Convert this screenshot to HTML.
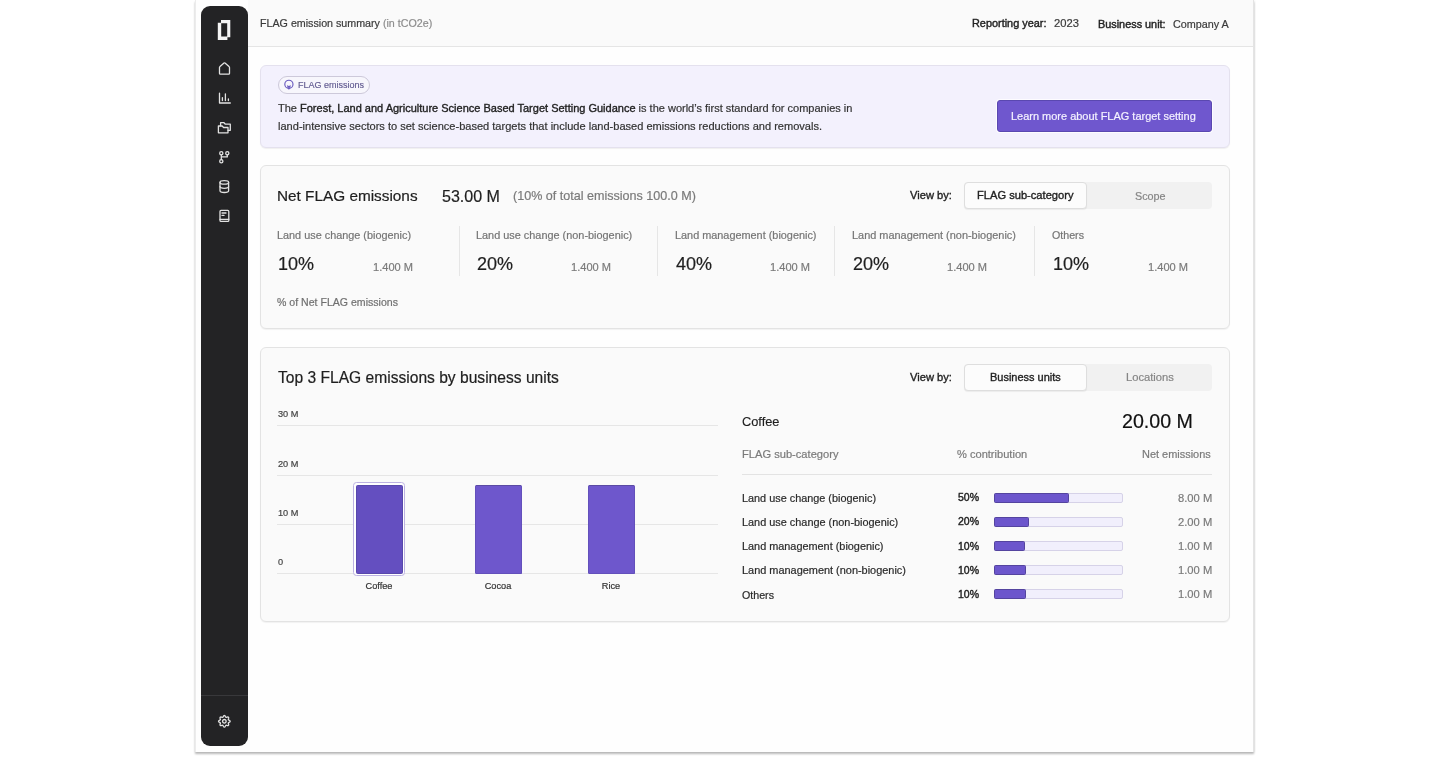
<!DOCTYPE html>
<html><head><meta charset="utf-8">
<style>
*{box-sizing:border-box;margin:0;padding:0}
html,body{width:1448px;height:758px;overflow:hidden;background:#fff;font-family:"Liberation Sans",sans-serif;color:#222}
.t{position:absolute;white-space:nowrap;line-height:1;will-change:transform}
svg{position:absolute;overflow:visible}
</style></head><body>
<div style="position:absolute;left:195px;top:0px;width:1059px;height:752px;background:#fefefe;border-left:1px solid #ececec;border-right:1px solid #e4e4e4;box-shadow:0 2px 2px rgba(0,0,0,0.28),1px 0 2px rgba(0,0,0,0.04)"></div>
<div style="position:absolute;left:248px;top:0px;width:1005px;height:47px;background:#fafafa;border-bottom:1px solid #e5e5e5"></div>
<div class="t" style="top:18.14px;font-size:10.7px;color:#3a3a3a;left:260px;-webkit-text-stroke:0.2px #3a3a3a;">FLAG emission summary <span style="color:#8c8c8c;-webkit-text-stroke:0.2px #8c8c8c">(in tCO2e)</span></div>
<div class="t" style="top:18.47px;font-size:10.9px;color:#222;left:972px;-webkit-text-stroke:0.4px #222;">Reporting year:</div>
<div class="t" style="top:18.22px;font-size:11.2px;color:#3a3a3a;left:1053.7px;-webkit-text-stroke:0.2px #3a3a3a;">2023</div>
<div class="t" style="top:18.50px;font-size:10.86px;color:#222;left:1098.4px;-webkit-text-stroke:0.4px #222;">Business unit:</div>
<div class="t" style="top:18.56px;font-size:10.8px;color:#3a3a3a;left:1173px;-webkit-text-stroke:0.2px #3a3a3a;">Company A</div>
<div style="position:absolute;left:201px;top:6px;width:47px;height:740px;background:#232325;border-radius:9px"></div>
<div style="position:absolute;left:201px;top:695px;width:47px;height:1px;background:#38383b"></div>
<svg style="left:0;top:0" width="1448" height="758"><path fill="#f4f4f4" fill-rule="evenodd" d="M221 20H230.3V37.3H227.4V40H217.8V22.8H221Z M221.2 23.2V36.4H227.2V23.2Z"/></svg>
<svg style="left:0;top:0" width="1448" height="758" fill="none" stroke="#e2e2e2" stroke-width="1.3" stroke-linejoin="round" stroke-linecap="round"><path d="M219.5 67.6Q219.5 67 220 66.6L224 63.1Q224.5 62.7 225 63.1L229 66.6Q229.5 67 229.5 67.6V73.4Q229.5 74.2 228.7 74.2H220.3Q219.5 74.2 219.5 73.4Z"/><path d="M219.5 93.2V103H230.3"/><path d="M222.4 97.6V100.6M225.4 93.8V100.6M228.4 99V100.6"/><path d="M218.4 126H222.2L223.6 127.5H228V132.8H218.4Z"/><path d="M220.6 125.8V122.7H224L225.4 124.2H230.3V130.3H228"/><circle cx="221.3" cy="153.3" r="1.6"/><circle cx="227.3" cy="153.3" r="1.6"/><circle cx="221.3" cy="161.2" r="1.6"/><path d="M221.3 155V159.6M227.3 155V156.9H221.3"/><ellipse cx="224.3" cy="182.4" rx="4.3" ry="1.7"/><path d="M220 182.4V190.8C220 191.8 222 192.5 224.3 192.5C226.6 192.5 228.6 191.8 228.6 190.8V182.4"/><path d="M220 186.6C220 187.6 222 188.3 224.3 188.3C226.6 188.3 228.6 187.6 228.6 186.6"/><rect x="220" y="210.4" width="8.8" height="11" rx="1"/><path d="M222 213H226M222 215.4H224M220 219.3H228.8"/><g transform="translate(224.35 721.3)"><circle r="1.8"/><path d="M0.00 -5.80 L0.23 -5.76 L0.44 -5.64 L0.65 -5.45 L0.83 -5.22 L0.99 -4.95 L1.12 -4.69 L1.25 -4.44 L1.37 -4.23 L1.50 -4.07 L1.65 -3.97 L1.82 -3.94 L2.02 -3.96 L2.25 -4.02 L2.52 -4.11 L2.81 -4.20 L3.10 -4.27 L3.40 -4.31 L3.67 -4.30 L3.91 -4.23 L4.10 -4.10 L4.23 -3.91 L4.30 -3.67 L4.31 -3.40 L4.27 -3.10 L4.20 -2.81 L4.11 -2.52 L4.02 -2.25 L3.96 -2.02 L3.94 -1.82 L3.97 -1.65 L4.07 -1.50 L4.23 -1.37 L4.44 -1.25 L4.69 -1.12 L4.95 -0.99 L5.22 -0.83 L5.45 -0.65 L5.64 -0.44 L5.76 -0.23 L5.80 -0.00 L5.76 0.23 L5.64 0.44 L5.45 0.65 L5.22 0.83 L4.95 0.99 L4.69 1.12 L4.44 1.25 L4.23 1.37 L4.07 1.50 L3.97 1.65 L3.94 1.82 L3.96 2.02 L4.02 2.25 L4.11 2.52 L4.20 2.81 L4.27 3.10 L4.31 3.40 L4.30 3.67 L4.23 3.91 L4.10 4.10 L3.91 4.23 L3.67 4.30 L3.40 4.31 L3.10 4.27 L2.81 4.20 L2.52 4.11 L2.25 4.02 L2.02 3.96 L1.82 3.94 L1.65 3.97 L1.50 4.07 L1.37 4.23 L1.25 4.44 L1.12 4.69 L0.99 4.95 L0.83 5.22 L0.65 5.45 L0.44 5.64 L0.23 5.76 L0.00 5.80 L-0.23 5.76 L-0.44 5.64 L-0.65 5.45 L-0.83 5.22 L-0.99 4.95 L-1.12 4.69 L-1.25 4.44 L-1.37 4.23 L-1.50 4.07 L-1.65 3.97 L-1.82 3.94 L-2.02 3.96 L-2.25 4.02 L-2.52 4.11 L-2.81 4.20 L-3.10 4.27 L-3.40 4.31 L-3.67 4.30 L-3.91 4.23 L-4.10 4.10 L-4.23 3.91 L-4.30 3.67 L-4.31 3.40 L-4.27 3.10 L-4.20 2.81 L-4.11 2.52 L-4.02 2.25 L-3.96 2.02 L-3.94 1.82 L-3.97 1.65 L-4.07 1.50 L-4.23 1.37 L-4.44 1.25 L-4.69 1.12 L-4.95 0.99 L-5.22 0.83 L-5.45 0.65 L-5.64 0.44 L-5.76 0.23 L-5.80 0.00 L-5.76 -0.23 L-5.64 -0.44 L-5.45 -0.65 L-5.22 -0.83 L-4.95 -0.99 L-4.69 -1.12 L-4.44 -1.25 L-4.23 -1.37 L-4.07 -1.50 L-3.97 -1.65 L-3.94 -1.82 L-3.96 -2.02 L-4.02 -2.25 L-4.11 -2.52 L-4.20 -2.81 L-4.27 -3.10 L-4.31 -3.40 L-4.30 -3.67 L-4.23 -3.91 L-4.10 -4.10 L-3.91 -4.23 L-3.67 -4.30 L-3.40 -4.31 L-3.10 -4.27 L-2.81 -4.20 L-2.52 -4.11 L-2.25 -4.02 L-2.02 -3.96 L-1.82 -3.94 L-1.65 -3.97 L-1.50 -4.07 L-1.37 -4.23 L-1.25 -4.44 L-1.12 -4.69 L-0.99 -4.95 L-0.83 -5.22 L-0.65 -5.45 L-0.44 -5.64 L-0.23 -5.76 L-0.00 -5.80Z"/></g></svg>
<div style="position:absolute;left:260px;top:65px;width:970px;height:83px;background:#f3f1fd;border:1px solid #e4e1ee;border-radius:6px;box-shadow:0 1px 1px rgba(0,0,0,0.06)"></div>
<div style="position:absolute;left:277.5px;top:76.3px;width:92.5px;height:17.299999999999997px;border:1px solid #cdc9da;border-radius:9px;background:#f7f6fc"></div>
<svg style="left:0;top:0" width="1448" height="758" fill="none" stroke="#6a5bbf" stroke-width="1.15"><circle cx="288.9" cy="84.3" r="4.1"/><path d="M287.2 85.6Q288.9 87.6 290.6 85.6" /><path d="M287.6 87.4H290.2L288.9 89.4Z" fill="#6a5bbf" stroke-width="0.6"/></svg>
<div class="t" style="top:81.08px;font-size:9px;color:#615a90;left:297.6px;-webkit-text-stroke:0.15px #615a90;">FLAG emissions</div>
<div class="t" style="top:103.39px;font-size:11px;color:#333;left:278px;-webkit-text-stroke:0.2px #333;">The <span style="-webkit-text-stroke:0.35px #222;color:#222">Forest, Land and Agriculture Science Based Target Setting Guidance</span> is the world&rsquo;s first standard for companies in</div>
<div class="t" style="top:121.04px;font-size:11.05px;color:#333;left:278px;-webkit-text-stroke:0.2px #333;">land-intensive sectors to set science-based targets that include land-based emissions reductions and removals.</div>
<div style="position:absolute;left:996.7px;top:100px;width:215.29999999999995px;height:32px;background:#6f57ce;border:1px solid #5a48b0;border-radius:3px;box-shadow:0 0 0 1px rgba(255,255,255,0.8)"></div>
<div class="t" style="top:111.40px;font-size:10.98px;color:#f4f2ff;left:1011.4px;-webkit-text-stroke:0.2px #f4f2ff;">Learn more about FLAG target setting</div>
<div style="position:absolute;left:260px;top:165px;width:970px;height:164px;background:#fafafa;border:1px solid #e3e3e3;border-radius:6px;box-shadow:0 1px 1px rgba(0,0,0,0.05)"></div>
<div class="t" style="top:188.42px;font-size:15.33px;color:#1e1e1e;left:277.4px;-webkit-text-stroke:0.2px #1e1e1e;">Net FLAG emissions</div>
<div class="t" style="top:187.81px;font-size:16.05px;color:#1e1e1e;left:441.5px;-webkit-text-stroke:0.2px #1e1e1e;">53.00 M</div>
<div class="t" style="top:190.36px;font-size:12.57px;color:#7a7a7a;left:513.3px;-webkit-text-stroke:0.2px #7a7a7a;">(10% of total emissions 100.0 M)</div>
<div class="t" style="top:190.24px;font-size:11.17px;color:#222;left:910px;-webkit-text-stroke:0.35px #222;">View by:</div>
<div style="position:absolute;left:964px;top:182px;width:248px;height:27px;background:#f1f1f1;border-radius:4px"></div>
<div style="position:absolute;left:964px;top:182px;width:123px;height:27px;background:#fcfcfc;border:1px solid #dedede;border-radius:4px;box-shadow:0 1px 1px rgba(0,0,0,0.06)"></div>
<div class="t" style="top:190.28px;font-size:11.13px;color:#222;left:976.7px;-webkit-text-stroke:0.35px #222;">FLAG sub-category</div>
<div class="t" style="top:190.56px;font-size:10.8px;color:#858585;left:1135px;-webkit-text-stroke:0.2px #858585;">Scope</div>
<div class="t" style="top:230.00px;font-size:10.86px;color:#757575;left:277.4px;-webkit-text-stroke:0.2px #757575;">Land use change (biogenic)</div>
<div class="t" style="top:254.56px;font-size:18px;color:#1e1e1e;left:278.4px;-webkit-text-stroke:0.2px #1e1e1e;">10%</div>
<div class="t" style="top:261.63px;font-size:11.07px;color:#7a7a7a;right:1035px;-webkit-text-stroke:0.2px #7a7a7a;">1.400 M</div>
<div class="t" style="top:229.97px;font-size:10.9px;color:#757575;left:476px;-webkit-text-stroke:0.2px #757575;">Land use change (non-biogenic)</div>
<div class="t" style="top:254.56px;font-size:18px;color:#1e1e1e;left:477px;-webkit-text-stroke:0.2px #1e1e1e;">20%</div>
<div class="t" style="top:261.63px;font-size:11.07px;color:#7a7a7a;right:837.3px;-webkit-text-stroke:0.2px #7a7a7a;">1.400 M</div>
<div class="t" style="top:229.99px;font-size:10.88px;color:#757575;left:674.5px;-webkit-text-stroke:0.2px #757575;">Land management (biogenic)</div>
<div class="t" style="top:254.56px;font-size:18px;color:#1e1e1e;left:675.5px;-webkit-text-stroke:0.2px #1e1e1e;">40%</div>
<div class="t" style="top:261.63px;font-size:11.07px;color:#7a7a7a;right:637.8px;-webkit-text-stroke:0.2px #7a7a7a;">1.400 M</div>
<div class="t" style="top:229.95px;font-size:10.93px;color:#757575;left:851.5px;-webkit-text-stroke:0.2px #757575;">Land management (non-biogenic)</div>
<div class="t" style="top:254.56px;font-size:18px;color:#1e1e1e;left:852.5px;-webkit-text-stroke:0.2px #1e1e1e;">20%</div>
<div class="t" style="top:261.63px;font-size:11.07px;color:#7a7a7a;right:461.1px;-webkit-text-stroke:0.2px #7a7a7a;">1.400 M</div>
<div class="t" style="top:230.17px;font-size:10.66px;color:#757575;left:1052.2px;-webkit-text-stroke:0.2px #757575;">Others</div>
<div class="t" style="top:254.56px;font-size:18px;color:#1e1e1e;left:1053.2px;-webkit-text-stroke:0.2px #1e1e1e;">10%</div>
<div class="t" style="top:261.63px;font-size:11.07px;color:#7a7a7a;right:260.4000000000001px;-webkit-text-stroke:0.2px #7a7a7a;">1.400 M</div>
<div style="position:absolute;left:458.5px;top:226px;width:1.0px;height:50px;background:#e6e6e6"></div>
<div style="position:absolute;left:656.5px;top:226px;width:1.0px;height:50px;background:#e6e6e6"></div>
<div style="position:absolute;left:834px;top:226px;width:1px;height:50px;background:#e6e6e6"></div>
<div style="position:absolute;left:1034px;top:226px;width:1px;height:50px;background:#e6e6e6"></div>
<div class="t" style="top:297.45px;font-size:10.57px;color:#707070;left:277.4px;-webkit-text-stroke:0.2px #707070;">% of Net FLAG emissions</div>
<div style="position:absolute;left:260px;top:347px;width:970px;height:275px;background:#fafafa;border:1px solid #e3e3e3;border-radius:6px;box-shadow:0 1px 1px rgba(0,0,0,0.05)"></div>
<div class="t" style="top:369.99px;font-size:15.6px;color:#1e1e1e;left:278px;-webkit-text-stroke:0.2px #1e1e1e;">Top 3 FLAG emissions by business units</div>
<div class="t" style="top:372.24px;font-size:11.17px;color:#222;left:909.8px;-webkit-text-stroke:0.35px #222;">View by:</div>
<div style="position:absolute;left:964px;top:364px;width:248px;height:27px;background:#f1f1f1;border-radius:4px"></div>
<div style="position:absolute;left:964px;top:364px;width:123px;height:27px;background:#fcfcfc;border:1px solid #dedede;border-radius:4px;box-shadow:0 1px 1px rgba(0,0,0,0.06)"></div>
<div class="t" style="top:372.40px;font-size:10.98px;color:#222;left:990.1px;-webkit-text-stroke:0.35px #222;">Business units</div>
<div class="t" style="top:372.22px;font-size:11.2px;color:#858585;left:1126.3px;-webkit-text-stroke:0.2px #858585;">Locations</div>
<div class="t" style="top:410.31px;font-size:9.2px;color:#444;left:278px;-webkit-text-stroke:0.2px #444;">30 M</div>
<div style="position:absolute;left:277px;top:425.3px;width:441px;height:1.0px;background:#e6e6e6"></div>
<div class="t" style="top:460.01px;font-size:9.2px;color:#444;left:278px;-webkit-text-stroke:0.2px #444;">20 M</div>
<div style="position:absolute;left:277px;top:474.6px;width:441px;height:1.0px;background:#e6e6e6"></div>
<div class="t" style="top:509.31px;font-size:9.2px;color:#444;left:278px;-webkit-text-stroke:0.2px #444;">10 M</div>
<div style="position:absolute;left:277px;top:524.3px;width:441px;height:1.0px;background:#e6e6e6"></div>
<div class="t" style="top:558.31px;font-size:9.2px;color:#444;left:278px;-webkit-text-stroke:0.2px #444;">0</div>
<div style="position:absolute;left:277px;top:573.3px;width:441px;height:1.0px;background:#e6e6e6"></div>
<div style="position:absolute;left:353.3px;top:481.9px;width:51.89999999999998px;height:93.80000000000007px;border:1.8px solid #bcb2e2;border-radius:3.5px;background:#fff"></div>
<div style="position:absolute;left:355.8px;top:484.8px;width:47.099999999999966px;height:88.80000000000001px;background:#644fc0;border:1px solid #5848ab;border-radius:1.5px"></div>
<div style="position:absolute;left:475px;top:484.8px;width:47px;height:88.80000000000001px;background:#6e57cc;border:1px solid #6350bb;border-top-color:#5a4aa3;border-radius:1.5px"></div>
<div style="position:absolute;left:588px;top:484.8px;width:47px;height:88.80000000000001px;background:#6e57cc;border:1px solid #6350bb;border-top-color:#5a4aa3;border-radius:1.5px"></div>
<div class="t" style="top:582.01px;font-size:9.2px;color:#333;left:279.3px;width:200px;text-align:center;-webkit-text-stroke:0.2px #333;">Coffee</div>
<div class="t" style="top:582.01px;font-size:9.2px;color:#333;left:398.2px;width:200px;text-align:center;-webkit-text-stroke:0.2px #333;">Cocoa</div>
<div class="t" style="top:582.01px;font-size:9.2px;color:#333;left:510.6px;width:200px;text-align:center;-webkit-text-stroke:0.2px #333;">Rice</div>
<div class="t" style="top:415.95px;font-size:12.81px;color:#1e1e1e;left:741.5px;-webkit-text-stroke:0.15px #1e1e1e;">Coffee</div>
<div class="t" style="top:412.16px;font-size:19.65px;color:#111;right:255px;-webkit-text-stroke:0.2px #111;">20.00 M</div>
<div class="t" style="top:449.18px;font-size:11.13px;color:#7a7a7a;left:741.5px;-webkit-text-stroke:0.2px #7a7a7a;">FLAG sub-category</div>
<div class="t" style="top:449.21px;font-size:11.09px;color:#7a7a7a;left:956.9px;-webkit-text-stroke:0.2px #7a7a7a;">% contribution</div>
<div class="t" style="top:449.22px;font-size:10.96px;color:#7a7a7a;right:236.79999999999995px;-webkit-text-stroke:0.2px #7a7a7a;">Net emissions</div>
<div style="position:absolute;left:741.5px;top:473.5px;width:470.0px;height:1.0px;background:#e3e3e3"></div>
<div class="t" style="top:493.20px;font-size:10.86px;color:#2a2a2a;left:741.5px;-webkit-text-stroke:0.2px #2a2a2a;">Land use change (biogenic)</div>
<div class="t" style="top:492.31px;font-size:10.5px;color:#222;left:957.8px;-webkit-text-stroke:0.4px #222;">50%</div>
<div style="position:absolute;left:994px;top:492.8px;width:129px;height:10.0px;background:#f1effc;border:1px solid #d6d2e8;border-radius:2px"></div>
<div style="position:absolute;left:994.3px;top:493.0px;width:74.90000000000009px;height:9.800000000000011px;background:#6c56cc;border:1px solid #54449f;border-radius:1.5px"></div>
<div class="t" style="top:492.83px;font-size:11.19px;color:#7a7a7a;right:236.29999999999995px;-webkit-text-stroke:0.2px #7a7a7a;">8.00 M</div>
<div class="t" style="top:517.27px;font-size:10.9px;color:#2a2a2a;left:741.5px;-webkit-text-stroke:0.2px #2a2a2a;">Land use change (non-biogenic)</div>
<div class="t" style="top:516.41px;font-size:10.5px;color:#222;left:957.8px;-webkit-text-stroke:0.4px #222;">20%</div>
<div style="position:absolute;left:994px;top:516.9000000000001px;width:129px;height:10.0px;background:#f1effc;border:1px solid #d6d2e8;border-radius:2px"></div>
<div style="position:absolute;left:994.3px;top:517.1px;width:34.700000000000045px;height:9.800000000000068px;background:#6c56cc;border:1px solid #54449f;border-radius:1.5px"></div>
<div class="t" style="top:516.93px;font-size:11.19px;color:#7a7a7a;right:236.29999999999995px;-webkit-text-stroke:0.2px #7a7a7a;">2.00 M</div>
<div class="t" style="top:541.39px;font-size:10.88px;color:#2a2a2a;left:741.5px;-webkit-text-stroke:0.2px #2a2a2a;">Land management (biogenic)</div>
<div class="t" style="top:540.51px;font-size:10.5px;color:#222;left:957.8px;-webkit-text-stroke:0.4px #222;">10%</div>
<div style="position:absolute;left:994px;top:541.0000000000001px;width:129px;height:10.0px;background:#f1effc;border:1px solid #d6d2e8;border-radius:2px"></div>
<div style="position:absolute;left:994.3px;top:541.2px;width:31.0px;height:9.800000000000068px;background:#6c56cc;border:1px solid #54449f;border-radius:1.5px"></div>
<div class="t" style="top:541.03px;font-size:11.19px;color:#7a7a7a;right:236.29999999999995px;-webkit-text-stroke:0.2px #7a7a7a;">1.00 M</div>
<div class="t" style="top:565.45px;font-size:10.93px;color:#2a2a2a;left:741.5px;-webkit-text-stroke:0.2px #2a2a2a;">Land management (non-biogenic)</div>
<div class="t" style="top:564.61px;font-size:10.5px;color:#222;left:957.8px;-webkit-text-stroke:0.4px #222;">10%</div>
<div style="position:absolute;left:994px;top:565.1000000000001px;width:129px;height:10.0px;background:#f1effc;border:1px solid #d6d2e8;border-radius:2px"></div>
<div style="position:absolute;left:994.3px;top:565.3000000000001px;width:31.700000000000045px;height:9.800000000000068px;background:#6c56cc;border:1px solid #54449f;border-radius:1.5px"></div>
<div class="t" style="top:565.13px;font-size:11.19px;color:#7a7a7a;right:236.29999999999995px;-webkit-text-stroke:0.2px #7a7a7a;">1.00 M</div>
<div class="t" style="top:589.77px;font-size:10.66px;color:#2a2a2a;left:741.5px;-webkit-text-stroke:0.2px #2a2a2a;">Others</div>
<div class="t" style="top:588.71px;font-size:10.5px;color:#222;left:957.8px;-webkit-text-stroke:0.4px #222;">10%</div>
<div style="position:absolute;left:994px;top:589.2px;width:129px;height:10.0px;background:#f1effc;border:1px solid #d6d2e8;border-radius:2px"></div>
<div style="position:absolute;left:994.3px;top:589.4px;width:31.700000000000045px;height:9.800000000000068px;background:#6c56cc;border:1px solid #54449f;border-radius:1.5px"></div>
<div class="t" style="top:589.23px;font-size:11.19px;color:#7a7a7a;right:236.29999999999995px;-webkit-text-stroke:0.2px #7a7a7a;">1.00 M</div>
</body></html>
